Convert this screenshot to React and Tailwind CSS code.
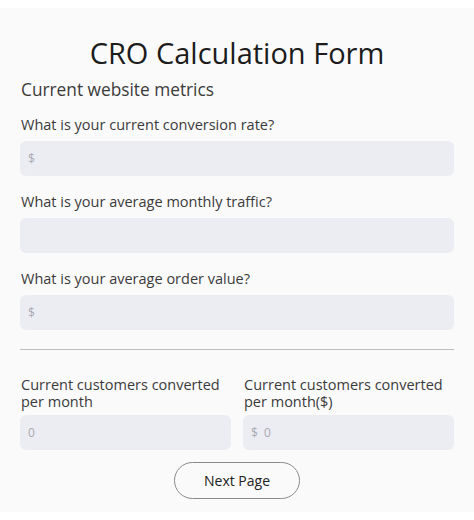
import React from "react";

function Field({ label, prefix, value }) {
  return (
    <div className="flex flex-col">
      <label className="text-[14.5px] leading-[17px] text-[#3a3a3a] pl-[1px]">{label}</label>
      <div className="mt-[8px] h-[35px] rounded-[6px] bg-[#ecedf3] flex items-center px-[8px] text-[12px] text-[#a8a9b0]">
        {prefix && <span>{prefix}</span>}
        {value && <span className="ml-[6px]">{value}</span>}
      </div>
    </div>
  );
}

export default function App() {
  return (
    <div className="w-[474px] h-[520px] bg-white pt-[8px] pb-[8px]" style={{ fontFamily: '"Open Sans", "Noto Sans", sans-serif' }}>
      <div className="h-full bg-[#fafafa] px-[20px] pt-[27px]">
        <h1 className="text-center text-[29px] leading-[36px] text-[#1c1c1c] font-normal">CRO Calculation Form</h1>
        <h2 className="mt-[8px] text-[17.3px] leading-[22px] text-[#3a3a3a] pl-[1px]">Current website metrics</h2>
        <div className="mt-[15px] flex flex-col gap-[17px]">
          <Field label="What is your current conversion rate?" prefix="$" />
          <Field label="What is your average monthly traffic?" />
          <Field label="What is your average order value?" prefix="$" />
        </div>
        <div className="mt-[19px] h-px bg-[#bdbdbd]" />
        <div className="mt-[26px] grid grid-cols-2 gap-[12px]">
          <div className="flex flex-col">
            <label className="text-[14.5px] leading-[17px] text-[#3a3a3a] pl-[1px]">Current customers converted per month</label>
            <div className="mt-[5px] h-[35px] rounded-[6px] bg-[#ecedf3] flex items-center px-[8px] text-[12px] text-[#a8a9b0]">0</div>
          </div>
          <div className="flex flex-col">
            <label className="text-[14.5px] leading-[17px] text-[#3a3a3a] pl-[1px]">Current customers converted per month($)</label>
            <div className="mt-[5px] h-[35px] rounded-[6px] bg-[#ecedf3] flex items-center px-[8px] text-[12px] text-[#a8a9b0]">
              <span>$</span><span className="ml-[6px]">0</span>
            </div>
          </div>
        </div>
        <div className="mt-[12px] flex justify-center">
          <button className="w-[126px] h-[37px] rounded-[19px] border border-[#8a8a8a] bg-transparent text-[14px] text-[#222]">Next Page</button>
        </div>
      </div>
    </div>
  );
}
